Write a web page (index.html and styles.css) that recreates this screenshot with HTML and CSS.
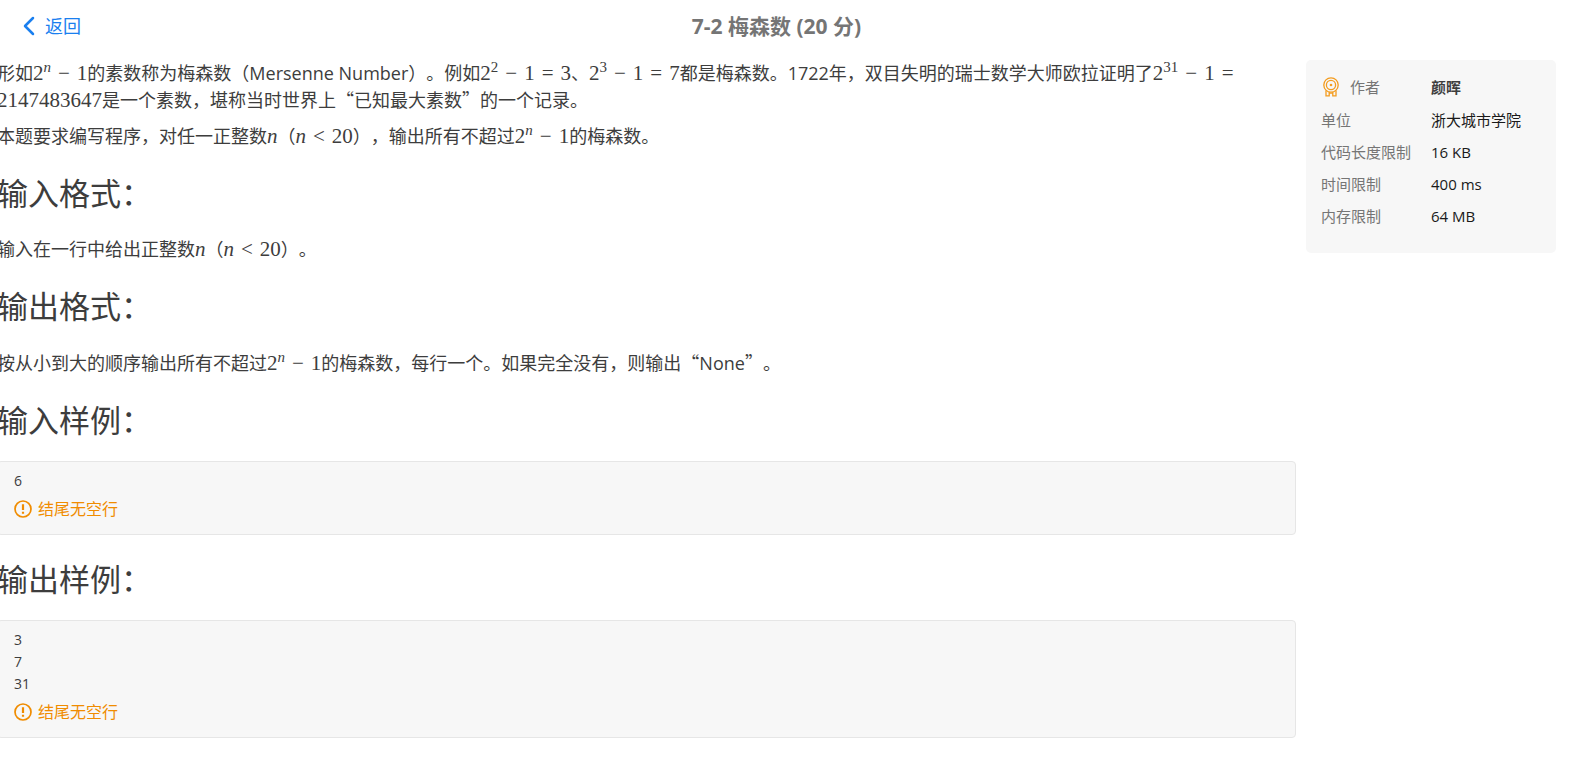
FILE: index.html
```html
<!DOCTYPE html>
<html lang="zh-CN">

<head>
    <meta charset="UTF-8">
    <meta name="viewport" content="width=device-width, initial-scale=1.0">
    <title>7-2 梅森数</title>
    <link rel="stylesheet" href="styles.css">
</head>

<body>
    <div class="page">
        <header class="header">
            <a href="#" class="back">
                <svg width="12" height="20" viewBox="0 0 12 20" fill="none" stroke="currentColor" stroke-width="2.5" stroke-linecap="round" stroke-linejoin="round">
                    <path d="M10 2 2 10l8 8" />
                </svg>
                返回
            </a>
            <h1 class="title">7-2 梅森数 (20 分)</h1>
        </header>

        <div class="content">
            <!-- 题目描述 -->
            <main class="problem">
                <p>形如<span class="math">2<sup><i>n</i></sup><b>−</b>1</span>的素数称为梅森数（Mersenne Number）。例如<span class="math">2<sup>2</sup><b>−</b>1<b>=</b>3</span>、<span class="math">2<sup>3</sup><b>−</b>1<b>=</b>7</span>都是梅森数。1722年，双目失明的瑞士数学大师欧拉证明了<span class="math">2<sup>31</sup><b>−</b>1<b>=</b></span><wbr><span class="math">2147483647</span>是一个素数，堪称当时世界上<span class="quote">“</span>已知最大素数<span class="quote">”</span>的一个记录。</p>
                <p>本题要求编写程序，对任一正整数<span class="math"><i>n</i></span>（<span class="math"><i>n</i><b>&lt;</b>20</span>），输出所有不超过<span class="math">2<sup><i>n</i></sup><b>−</b>1</span>的梅森数。</p>

                <h2>输入格式：</h2>
                <p>输入在一行中给出正整数<span class="math"><i>n</i></span>（<span class="math"><i>n</i><b>&lt;</b>20</span>）。</p>

                <h2>输出格式：</h2>
                <p>按从小到大的顺序输出所有不超过<span class="math">2<sup><i>n</i></sup><b>−</b>1</span>的梅森数，每行一个。如果完全没有，则输出<span class="quote">“</span>None<span class="quote">”</span>。</p>

                <h2>输入样例：</h2>
                <div class="sample">
                    <pre>6</pre>
                    <div class="tip">
                        <svg width="18" height="18" viewBox="0 0 18 18" fill="none" stroke="currentColor">
                            <circle cx="9" cy="9" r="8" stroke-width="1.7" />
                            <path d="M9 4.2v5.8M9 11.8v2" stroke-width="2.2" />
                        </svg>
                        <span>结尾无空行</span>
                    </div>
                </div>

                <h2>输出样例：</h2>
                <div class="sample">
                    <pre>3
7
31</pre>
                    <div class="tip">
                        <svg width="18" height="18" viewBox="0 0 18 18" fill="none" stroke="currentColor">
                            <circle cx="9" cy="9" r="8" stroke-width="1.7" />
                            <path d="M9 4.2v5.8M9 11.8v2" stroke-width="2.2" />
                        </svg>
                        <span>结尾无空行</span>
                    </div>
                </div>
            </main>

            <!-- 题目信息 -->
            <aside class="info">
                <dl>
                    <dt class="author">
                        <svg width="20" height="20" viewBox="0 0 20 20" fill="none" stroke="currentColor" stroke-width="1.3">
                            <circle cx="10" cy="8" r="7.2" />
                            <circle cx="10" cy="8" r="4.6" />
                            <circle cx="10" cy="8" r="1.3" fill="currentColor" stroke="none" />
                            <path d="M5 13.5v5.3h3.2v-2.6h3.6v2.6H15v-5.3M8.2 15v1.5M11.8 15v1.5" />
                        </svg>
                        作者
                    </dt>
                    <dd class="name">颜晖</dd>
                    <dt>单位</dt>
                    <dd>浙大城市学院</dd>
                    <dt>代码长度限制</dt>
                    <dd>16 KB</dd>
                    <dt>时间限制</dt>
                    <dd>400 ms</dd>
                    <dt>内存限制</dt>
                    <dd>64 MB</dd>
                </dl>
            </aside>
        </div>
    </div>
</body>

</html>
```
FILE: styles.css
```css
* {
    box-sizing: border-box;
}

body {
    margin: 0;
    padding: 0;
    background-color: #fff;
    color: #3d3d3d;
    font-family: "Open Sans", "Noto Sans CJK SC", sans-serif;
    font-size: 18px;
    line-height: 26px;
    text-spacing-trim: space-all;
    overflow-x: hidden;
}

.page {
    margin: 0 19px 0 -3px;
}

.header {
    display: grid;
    grid-template-columns: 1fr auto 1fr;
    align-items: center;
    height: 52px;
}

.back {
    display: flex;
    align-items: center;
    gap: 10px;
    padding-left: 26px;
    color: #1a7fef;
    text-decoration: none;
}

.title {
    margin: 0;
    color: #757575;
    font-size: 21px;
    font-weight: bold;
}

.content {
    display: flex;
    align-items: flex-start;
    gap: 10px;
    padding: 8px 0 24px;
}

.problem {
    flex: 1;
    min-width: 0;
}

.problem p {
    margin: 21px 0 0;
}

.problem p:first-child {
    margin-top: 0;
}

.problem p + p {
    margin-top: 10px;
}

.problem h2 {
    margin: 22px 0 19px;
    font-size: 31px;
    font-weight: normal;
    line-height: 44px;
}

/* 数学公式 */
.math {
    font-family: "Liberation Serif", serif;
    font-size: 21px;
    line-height: 20px;
    white-space: nowrap;
}

.math sup {
    font-size: 15px;
    line-height: 0;
}

.math b {
    margin: 0 7px;
    font-weight: normal;
}

.quote {
    font-family: "Noto Sans CJK SC", sans-serif;
}

/* 样例 */
.sample {
    padding: 8px 16px 13px;
    background-color: #f7f7f7;
    border: 1px solid #e6e6e6;
    border-radius: 4px;
}

.sample pre {
    margin: 0 0 5px;
    font-family: "Open Sans", sans-serif;
    font-size: 14px;
    line-height: 22px;
}

.tip {
    display: flex;
    align-items: center;
    gap: 6px;
    height: 24px;
    color: #f08c00;
    font-size: 16px;
}

/* 右侧信息 */
.info {
    width: 250px;
    padding: 15px 15px 26px;
    background-color: #f7f7f7;
    border-radius: 5px;
    font-size: 15px;
    line-height: 22px;
}

.info dl {
    display: grid;
    grid-template-columns: 90px 1fr;
    align-items: center;
    gap: 10px 20px;
    margin: 0;
}

.info dt {
    color: #757575;
}

.info dd {
    margin: 0;
    color: #1a1a1a;
}

.info .author {
    display: flex;
    align-items: center;
    gap: 9px;
    height: 24px;
}

.info .author svg {
    color: #f39c1f;
}

.info .name {
    color: #3d3d3d;
    font-weight: bold;
}
```
